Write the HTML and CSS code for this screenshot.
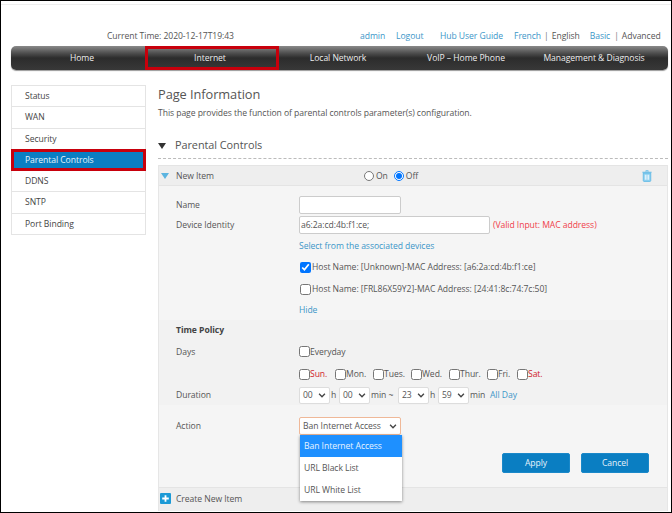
FILE: index.html
```html
<!DOCTYPE html>
<html lang="en">
<head>
<meta charset="utf-8">
<title>Parental Controls</title>
<link rel="stylesheet" href="styles.css">
</head>
<body>
<div class="frame">
  <header class="top">
    <span class="time">Current Time: 2020-12-17T19:43</span>
    <a class="link admin">admin</a>
    <a class="link logout">Logout</a>
    <a class="link guide">Hub User Guide</a>
    <a class="link french">French</a><span class="sep">|</span><span class="plain english">English</span>
    <a class="link basic">Basic</a><span class="sep">|</span><span class="plain">Advanced</span>
  </header>
  <nav class="nav">
    <span class="nav-item">Home</span>
    <span class="nav-item active">Internet</span>
    <span class="nav-item">Local Network</span>
    <span class="nav-item">VoIP – Home Phone</span>
    <span class="nav-item">Management &amp; Diagnosis</span>
  </nav>
  <div class="columns">
    <aside class="side">
      <div class="side-item">Status</div>
      <div class="side-item">WAN</div>
      <div class="side-item">Security</div>
      <div class="side-item current">Parental Controls</div>
      <div class="side-item">DDNS</div>
      <div class="side-item">SNTP</div>
      <div class="side-item">Port Binding</div>
    </aside>
    <main class="main">
      <h1 class="title">Page Information</h1>
      <p class="intro">This page provides the function of parental controls parameter(s) configuration.</p>
      <h2 class="section"><span class="tri"></span>Parental Controls</h2>
      <section class="panel">
        <div class="panel-head">
          <span class="tri-blue"></span>
          <span class="item-name">New Item</span>
          <label class="radio on"><input type="radio" name="st">On</label>
          <label class="radio"><input type="radio" name="st" checked>Off</label>
          <svg class="trash" width="10" height="12" viewBox="0 0 12 14"><path d="M4.5 1.5V.8h3v.7M.5 2.5h11" fill="none" stroke="#5cb8e6" stroke-width="1.2"/><path d="M1.5 3.5h9v9a1 1 0 0 1-1 1h-7a1 1 0 0 1-1-1z" fill="#8fd0f0" stroke="#5cb8e6"/><path d="M4 5.5v6M6 5.5v6M8 5.5v6" stroke="#fff" stroke-width="1"/></svg>
        </div>
        <div class="block block-a">
          <div class="row r-name"><span class="lab">Name</span><input class="field f-name" type="text"></div>
          <div class="row r-dev"><span class="lab">Device Identity</span><input class="field f-dev" type="text" value="a6:2a:cd:4b:f1:ce;"><span class="err">(Valid Input: MAC address)</span></div>
          <div class="row r-sel"><span class="lab"></span><a class="link">Select from the associated devices</a></div>
          <div class="row r-host"><span class="lab"></span><label class="check host"><input type="checkbox" checked>Host Name: [Unknown]-MAC Address: [a6:2a:cd:4b:f1:ce]</label></div>
          <div class="row r-host"><span class="lab"></span><label class="check host"><input type="checkbox">Host Name: [FRL86X59Y2]-MAC Address: [24:41:8c:74:7c:50]</label></div>
          <div class="row r-hide"><span class="lab"></span><a class="link">Hide</a></div>
        </div>
        <div class="block block-b">
          <div class="policy">Time Policy</div>
          <div class="row r-days"><span class="lab">Days</span><label class="check"><input type="checkbox">Everyday</label></div>
          <div class="row r-week"><span class="lab"></span>
            <label class="check d-sun red"><input type="checkbox">Sun.</label>
            <label class="check d-mon"><input type="checkbox">Mon.</label>
            <label class="check d-tue"><input type="checkbox">Tues.</label>
            <label class="check d-wed"><input type="checkbox">Wed.</label>
            <label class="check d-thu"><input type="checkbox">Thur.</label>
            <label class="check d-fri"><input type="checkbox">Fri.</label>
            <label class="check red"><input type="checkbox">Sat.</label>
          </div>
          <div class="row r-dur"><span class="lab">Duration</span>
            <span class="sel small">00<svg class="chev" width="8" height="5" viewBox="0 0 9 6"><path d="M1 1l3.5 3.5L8 1" fill="none" stroke="#444" stroke-width="1.6"/></svg></span><span class="unit u-h">h</span>
            <span class="sel small">00<svg class="chev" width="8" height="5" viewBox="0 0 9 6"><path d="M1 1l3.5 3.5L8 1" fill="none" stroke="#444" stroke-width="1.6"/></svg></span><span class="unit u-min">min ~</span>
            <span class="sel small">23<svg class="chev" width="8" height="5" viewBox="0 0 9 6"><path d="M1 1l3.5 3.5L8 1" fill="none" stroke="#444" stroke-width="1.6"/></svg></span><span class="unit u-h">h</span>
            <span class="sel small">59<svg class="chev" width="8" height="5" viewBox="0 0 9 6"><path d="M1 1l3.5 3.5L8 1" fill="none" stroke="#444" stroke-width="1.6"/></svg></span><span class="unit u-end">min</span>
            <a class="link">All Day</a>
          </div>
        </div>
        <div class="block block-c">
          <div class="row r-action"><span class="lab">Action</span>
            <div class="drop">
              <span class="sel big">Ban Internet Access<svg class="chev" width="8" height="5" viewBox="0 0 9 6"><path d="M1 1l3.5 3.5L8 1" fill="none" stroke="#444" stroke-width="1.6"/></svg></span>
              <ul class="menu">
                <li class="opt picked">Ban Internet Access</li>
                <li class="opt">URL Black List</li>
                <li class="opt">URL White List</li>
              </ul>
            </div>
          </div>
          <div class="buttons"><button class="btn">Apply</button><button class="btn">Cancel</button></div>
        </div>
        <div class="panel-foot">
          <svg class="plus" width="11" height="11" viewBox="0 0 11 11"><rect width="11" height="11" rx="1" fill="#1c9ad6"/><path d="M5.5 2.2v6.6M2.2 5.5h6.6" stroke="#fff" stroke-width="1.8"/></svg>
          <span>Create New Item</span>
        </div>
      </section>
    </main>
  </div>
</div>
</body>
</html>
```
FILE: styles.css
```css
* { box-sizing: border-box; }
html, body { margin: 0; padding: 0; }
body { font-family: "Open Sans", "Noto Sans", sans-serif; font-size: 8.6px; letter-spacing: -.06px; color: #555; background: #000; }
.frame { width: 670px; height: 511px; margin: 1px 2px 1px 1px; background: #fff; overflow: hidden; padding-top: 3px; position: relative; }
.frame::before { content: ""; display: block; height: 1px; background: #eee; }
.link { color: #3c96c8; }

.top { height: 41px; display: flex; align-items: flex-end; padding: 0 0 3px 106px; line-height: 13px; white-space: nowrap; }
.top > * { flex: none; }
.time { color: #555; width: 253px; }
.admin { width: 36px; }
.logout { width: 44px; }
.guide { width: 74px; }
.french { margin-right: 3px; }
.sep { color: #777; margin-right: 3px; }
.plain { color: #555; }
.english { margin-right: 10px; }
.basic { margin-right: 4px; }

.nav { display: flex; margin: 0 3px 0 10px; height: 24px; padding-left: 7px; border-radius: 5px; background: linear-gradient(#8a8a8a 0, #4e4e4e 30%, #2c2c2c 50%, #383838 100%); box-shadow: 0 1px 1px #999; }
.nav-item { width: 128px; color: #eee; text-align: center; line-height: 24px; position: relative; white-space: nowrap; }
.nav-item.active::after { content: ""; position: absolute; left: -1px; right: -5px; top: 0; bottom: 0; border: 3px solid #c8000c; }

.columns { display: flex; margin: 15px 3px 0 10px; }
.side { width: 135px; height: 150px; border: 1px solid #e4e4e4; background: #fff; flex: none; }
.side-item { height: 21.3px; line-height: 20px; padding-left: 13px; border-bottom: 1px solid #e4e4e4; color: #444; position: relative; }
.side-item:last-child { border-bottom: 0; }
.side-item.current { background: #0a7ec2; color: #e8f4fb; }
.side-item.current::after { content: ""; position: absolute; left: -1px; right: -1px; top: -1px; bottom: -1px; border: 3px solid #c8000c; }

.main { margin-left: 12px; width: 510px; }
.title { margin: 0; font-weight: 400; font-size: 12.8px; line-height: 18px; color: #555; }
.intro { margin: 0; line-height: 14px; padding-top: 3px; height: 31px; }
.section { margin: 0; height: 25px; font-weight: 400; font-size: 10.9px; line-height: 18px; padding-top: 2px; color: #555; border-bottom: 1px dashed #bbb; display: flex; align-items: flex-start; }
.tri { width: 0; height: 0; margin: 7px 9px 0 0; border: 4px solid transparent; border-top: 6px solid #333; border-bottom: 0; }

.panel { margin-top: 6px; height: 346px; background: #f5f5f5; border-left: 1px solid #e6e6e6; border-right: 1px solid #e6e6e6; display: flex; flex-direction: column; }
.panel-head { height: 21px; flex: none; background: #eee; border-top: 1px solid #e4e4e4; border-bottom: 1px solid #e4e4e4; display: flex; align-items: center; }
.tri-blue { width: 0; height: 0; margin-left: 2px; border: 4px solid transparent; border-top: 6px solid #5bb4e0; border-bottom: 0; }
.item-name { margin-left: 7px; width: 188px; }
.radio { display: flex; align-items: center; }
.radio input { margin: 0 2px 0 0; width: 10px; height: 10px; }
.radio.on { margin-right: 6px; }
.trash { margin-left: auto; margin-right: 15px; }

.row { display: flex; align-items: center; white-space: nowrap; }
.lab { width: 140px; flex: none; padding-left: 17px; }
.field { height: 18px; padding: 0 1px; border: 1px solid #ccc; border-radius: 2px; background: #fff; font: inherit; letter-spacing: inherit; color: #555; }
.f-name { width: 102px; }
.f-dev { width: 191px; }
.err { color: #f0404a; margin-left: 3px; }
.block { flex: none; }
.block-a { height: 134px; padding-top: 8px; }
.r-name { height: 21px; }
.r-dev { height: 20px; }
.r-sel { height: 21px; }
.r-host { height: 22px; }
.r-host .check { margin-left: 1px; }
.r-hide { height: 20px; }
.check { display: inline-flex; align-items: center; }
.check input { margin: 0; width: 11px; height: 11px; }
.host input { margin-right: 1px; }
.d-sun { width: 36px; }
.d-mon { width: 38px; }
.d-tue { width: 38px; }
.d-wed { width: 38px; }
.d-thu { width: 38px; }
.d-fri { width: 30px; }
.red { color: #d0202a; }
.block-b { height: 85px; background: #f2f2f2; padding-top: 3px; }
.policy { font-weight: 700; padding-left: 17px; height: 17px; line-height: 14px; color: #444; }
.r-days { height: 23px; }
.r-week { height: 22px; }
.r-dur { height: 20px; }
.sel { height: 17px; display: inline-flex; align-items: center; justify-content: space-between; background: #fff; border: 1px solid #ddd; border-radius: 2px; padding: 0 3px 0 3px; color: #555; }
.small { width: 31px; flex: none; }
.unit { flex: none; padding-left: 1px; }
.u-h { width: 9px; }
.u-min { width: 28px; }
.u-end { width: 21px; }
.block-c { height: 82px; padding-top: 12px; }
.r-action { height: 18px; }
.drop { position: relative; }
.big { width: 102px; height: 18px; border-color: #efb898; }
.menu { position: absolute; left: 1px; top: 18px; width: 102px; margin: 0; padding: 0; list-style: none; background: #fff; box-shadow: 0 1px 3px rgba(0,0,0,.45); z-index: 2; }
.opt { height: 22px; line-height: 22px; padding-left: 4px; color: #555; }
.opt.picked { background: #1e90ff; color: #e8f4ff; }
.buttons { display: flex; justify-content: flex-end; gap: 11px; margin-top: 18px; padding-right: 18px; }
.btn { width: 68px; height: 20px; padding: 0; border: 1px solid #1a88c9; border-radius: 2px; background: #0a7ec2; color: #e6f3fb; font: inherit; letter-spacing: inherit; }
.panel-foot { height: 24px; flex: none; background: #eee; border-top: 1px solid #e4e4e4; display: flex; align-items: center; padding: 0 0 2px 1px; }
.plus { margin-right: 5px; }
```
